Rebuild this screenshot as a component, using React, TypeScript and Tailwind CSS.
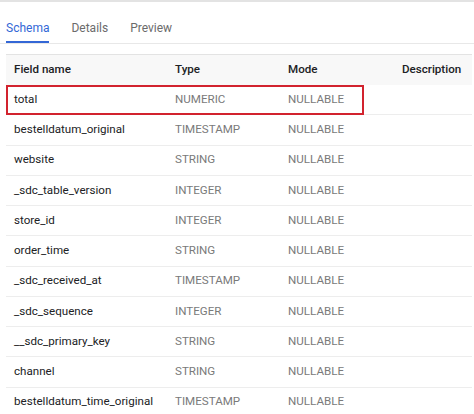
import React from "react";

const rows: [string, string, string][] = [
  ["total", "NUMERIC", "NULLABLE"],
  ["bestelldatum_original", "TIMESTAMP", "NULLABLE"],
  ["website", "STRING", "NULLABLE"],
  ["_sdc_table_version", "INTEGER", "NULLABLE"],
  ["store_id", "INTEGER", "NULLABLE"],
  ["order_time", "STRING", "NULLABLE"],
  ["_sdc_received_at", "TIMESTAMP", "NULLABLE"],
  ["_sdc_sequence", "INTEGER", "NULLABLE"],
  ["__sdc_primary_key", "STRING", "NULLABLE"],
  ["channel", "STRING", "NULLABLE"],
  ["bestelldatum_time_original", "TIMESTAMP", "NULLABLE"],
];

export default function App() {
  return (
    <div
      className="w-[474px] h-[414px] overflow-hidden bg-white text-[11.6px]"
      style={{ fontFamily: "Roboto, 'Liberation Sans', sans-serif" }}
    >
      <div className="h-[2px] bg-[#e3e3e3]" />
      <div className="flex h-[42px] border-b border-[#e8e8e8] pl-[6px] gap-[22px] text-[12px]">
        <div className="relative flex items-center pt-[11px] text-[#3367d6]">
          Schema
          <div className="absolute left-0 right-0 bottom-0 h-[2px] bg-[#3367d6]" />
        </div>
        <div className="flex items-center pt-[11px] text-[#6b6b6b]">Details</div>
        <div className="flex items-center pt-[11px] text-[#6b6b6b]">Preview</div>
      </div>
      <div className="ml-[6px] mr-[2px] mt-[10px]">
        <div className="grid grid-cols-[161px_113px_114px_1fr] h-[31px] items-center bg-[#f8f8f8] border-t border-[#e3e3e3] font-medium text-[#202124]">
          <div className="pl-[8px]">Field name</div>
          <div className="pl-[8px]">Type</div>
          <div className="pl-[8px]">Mode</div>
          <div className="pl-[8px]">Description</div>
        </div>
        {rows.map(([name, type, mode], i) => (
          <div
            key={name}
            className="relative grid grid-cols-[161px_113px_114px_1fr] h-[30.25px] items-center border-b border-[#ededed]"
          >
            <div className="pl-[8px] text-[#202124]">{name}</div>
            <div className="pl-[8px] text-[#7a7a7a]">{type}</div>
            <div className="pl-[8px] text-[#7a7a7a]">{mode}</div>
            <div />
            {i === 0 && (
              <div className="absolute left-0 top-0 w-[358px] h-[30px] border-2 border-[#d2232e]" />
            )}
          </div>
        ))}
      </div>
    </div>
  );
}
